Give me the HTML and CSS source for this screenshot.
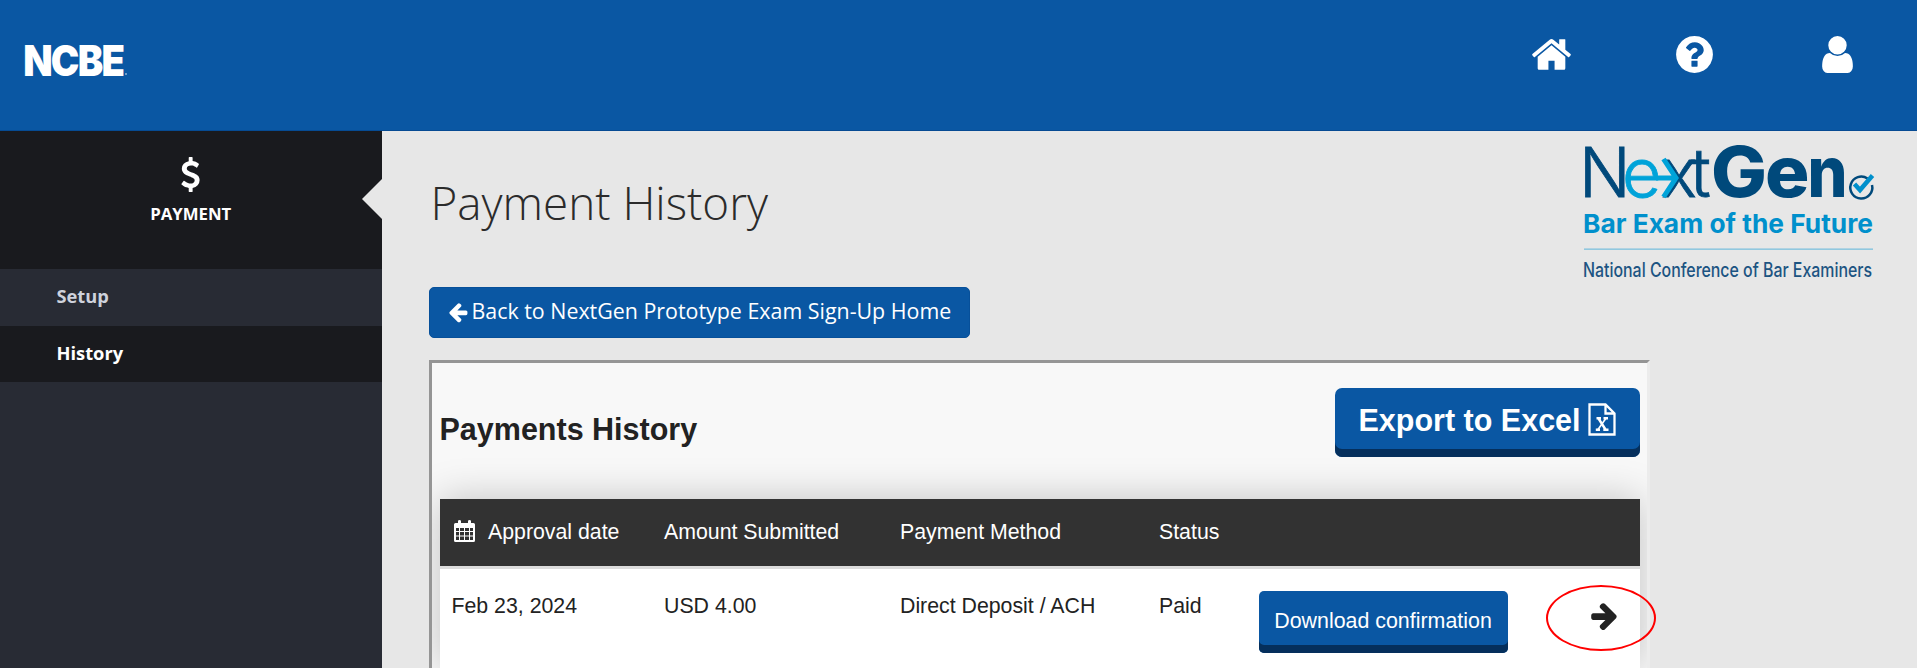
FILE: index.html
```html
<!DOCTYPE html>
<html lang="en">
<head>
<meta charset="utf-8">
<title>Payment History</title>
<link rel="stylesheet" href="styles.css">
</head>
<body>
<header class="topbar">
  <svg class="ncbe" width="110" height="44" viewBox="0 0 110 44" role="img" aria-label="NCBE">
    <text class="ncbe-word" transform="scale(.9 1)" x="-2" y="37" textLength="113" lengthAdjust="spacing">NCBE</text>
    <circle cx="101" cy="35" r="1" fill="#8fb3d6"/>
  </svg>
  <nav class="topnav">
    <a><svg class="icon-nav" viewBox="0 0 1792 1792"><path d="M1472 992v480q0 26-19 45t-45 19h-384v-384h-256v384h-384q-26 0-45-19t-19-45v-480q0-1 .5-3t.5-3l575-474 575 474q1 2 1 6zm223-69l-62 74q-8 9-21 11h-3q-13 0-21-7l-692-577-692 577q-12 8-24 7-13-2-21-11l-62-74q-8-10-7-23.5t11-21.5l719-599q32-26 76-26t76 26l244 204v-195q0-14 9-23t23-9h192q14 0 23 9t9 23v408l219 182q10 8 11 21.5t-7 23.5z"/></svg></a>
    <a><svg class="icon-nav" viewBox="0 0 1792 1792"><path d="M1024 1376v-192q0-14-9-23t-23-9h-192q-14 0-23 9t-9 23v192q0 14 9 23t23 9h192q14 0 23-9t9-23zm256-672q0-88-55.5-163t-138.5-116-170-41q-243 0-371 213-15 24 8 42l132 100q7 6 19 6 16 0 25-12 53-68 86-92 34-24 86-24 48 0 85.5 26t37.5 59q0 38-20 61t-68 45q-63 28-115.5 86.5t-52.5 125.5v36q0 14 9 23t23 9h192q14 0 23-9t9-23q0-19 21.5-49.5t54.5-49.5q32-18 49-28.5t46-35 44.5-48 28-60.5 12.5-81zm384 192q0 209-103 385.5t-279.5 279.5-385.5 103-385.5-103-279.5-279.5-103-385.5 103-385.5 279.5-279.5 385.5-103 385.5 103 279.5 279.5 103 385.5z"/></svg></a>
    <a><svg class="icon-nav" viewBox="0 0 1792 1792"><path d="M1536 1399q0 109-62.5 187t-150.5 78h-854q-88 0-150.5-78t-62.5-187q0-85 8.5-160.5t31.5-152 58.5-131 94-89 134.5-34.5q131 128 313 128t313-128q76 0 134.5 34.5t94 89 58.5 131 31.5 152 8.5 160.5zm-256-887q0 159-112.5 271.5t-271.5 112.5-271.5-112.5-112.5-271.5 112.5-271.5 271.5-112.5 271.5 112.5 112.5 271.5z"/></svg></a>
  </nav>
</header>
<div class="body">
  <aside class="sidebar">
    <div class="section">
      <svg class="icon-usd" viewBox="0 0 1792 1792"><path d="M1362 1185q0 153-99.5 263.5t-258.5 136.5v175q0 14-9 23t-23 9h-135q-13 0-22.5-9.5t-9.5-22.5v-175q-66-9-127.5-31t-101.5-44.5-74-48-46.5-37.5-17.5-18q-17-21-2-41l103-135q7-10 23-12 15-2 24 9l2 2q113 99 243 125 37 8 74 8 81 0 142.5-43t61.5-122q0-28-15-53t-33.5-42-58.5-37.5-66-32-80-32.5q-39-16-61.5-25t-61.5-26.5-62.5-31-56.5-35.5-53.5-42.5-43.5-49-35.5-58-21-66.5-8.5-78q0-138 98-242t255-134v-180q0-13 9.5-22.5t22.5-9.5h135q14 0 23 9t9 23v176q57 6 110.5 23t87 33.5 63.5 37.5 39 29 15 14q17 18 5 38l-81 146q-8 15-23 16-14 3-27-7-3-3-14.5-12t-39-26.5-58.5-32-74.5-26-85.5-11.5q-95 0-155 43t-60 111q0 26 8.5 48t29.5 41.5 39.5 33 56 31 60.5 27 70 27.5q53 20 81 31.5t76 35 75.5 42.5 62 50 53 63.5 31.5 76.5 13 94z"/></svg>
      <span class="section-name">PAYMENT</span>
      <i class="notch"></i>
    </div>
    <a class="item">Setup</a>
    <a class="item current">History</a>
  </aside>
  <main class="main">
    <div class="head">
      <div class="head-left">
        <h1 class="title">Payment History</h1>
        <a class="back"><svg class="icon-back" viewBox="0 0 1792 1792"><path d="M1664 896v128q0 53-32.5 90.5t-84.5 37.5h-704l293 294q38 36 38 90t-38 90l-75 76q-37 37-90 37-52 0-91-37l-651-652q-37-37-37-90 0-52 37-91l651-650q38-38 91-38 52 0 90 38l75 74q38 38 38 91t-38 91l-293 293h704q52 0 84.5 37.5t32.5 90.5z"/></svg><span class="back-label">Back to NextGen Prototype Exam Sign-Up Home</span></a>
      </div>
      <svg class="nextgen" width="300" height="150" viewBox="0 0 300 150">
        <text class="thin" y="65.500" x="-5 38 77 106.500">N<tspan class="cyan">e</tspan>xt</text>
        <path class="x-gap" d="M75.500 28L88 47L75.500 66"/>
        <path class="x-arrow" d="M79.500 28L92 47L79.500 66M72 47H90"/>
        <g class="heavy">
          <text x="127" y="66" textLength="56" lengthAdjust="spacingAndGlyphs">G</text>
          <text x="181" y="66" textLength="44.500" lengthAdjust="spacingAndGlyphs">e</text>
          <text x="223.500" y="66" textLength="40" lengthAdjust="spacingAndGlyphs">n</text>
        </g>
        <path class="ring" d="M283.500 47.500A11 11 0 1 0 288 54"/>
        <path class="tick" d="M270.500 53L276 59L288.500 44.500"/>
        <text class="tagline" x="-1" y="102" textLength="290" lengthAdjust="spacingAndGlyphs">Bar Exam of the Future</text>
        <rect x="0" y="117.500" width="289" height="1.300" fill="#7cc0dd"/>
        <text class="org" x="-1" y="145.500" textLength="289" lengthAdjust="spacingAndGlyphs">National Conference of Bar Examiners</text>
      </svg>
    </div>
    <div class="frame-wrap">
      <section class="frame">
        <div class="frame-head">
          <h2 class="subtitle">Payments History</h2>
          <button class="btn export"><span class="export-label">Export to Excel</span>
            <svg class="icon-excel" width="28" height="33" viewBox="0 0 28 33"><path d="M1.500 1.500H17.500L26.500 10.500V31.500H1.500ZM17.500 1.500V10.500H26.500"/><path d="M10.500 15.500L17.500 26.500M8.500 15.200H13M15.500 15.200H20M7.800 26.800H12M15.300 26.800H20.500" stroke-width="2.400"/><path d="M17.800 15.500L10 26.500" stroke-width="1.600"/></svg>
          </button>
        </div>
        <div class="table">
          <div class="row thead">
            <div class="cell date"><svg class="icon-cal" width="21" height="22" viewBox="0 0 21 22"><path fill-rule="evenodd" d="M1.500 3H4V1.200Q4 0 5.500 0T7 1.200V3H14V1.200Q14 0 15.500 0T17 1.200V3H19.500Q21 3 21 4.500V20.500Q21 22 19.500 22H1.500Q0 22 0 20.500V4.500Q0 3 1.500 3ZM2 8V11H5V8ZM6 8V11H10V8ZM11 8V11H15V8ZM16 8V11H19V8ZM2 12V15.500H5V12ZM6 12V15.500H10V12ZM11 12V15.500H15V12ZM16 12V15.500H19V12ZM2 16.500V20H5V16.500ZM6 16.500V20H10V16.500ZM11 16.500V20H15V16.500ZM16 16.500V20H19V16.500Z"/></svg>Approval date</div>
            <div class="cell">Amount Submitted</div>
            <div class="cell">Payment Method</div>
            <div class="cell">Status</div>
          </div>
          <div class="row entry">
            <div class="cell first">Feb 23, 2024</div>
            <div class="cell">USD 4.00</div>
            <div class="cell">Direct Deposit / ACH</div>
            <div class="cell">Paid</div>
            <div class="action"><button class="btn download">Download confirmation</button></div>
            <div class="go">
              <svg class="icon-go" viewBox="0 0 1792 1792"><path d="M1600 960q0 54-37 91l-651 651q-39 37-91 37-51 0-90-37l-75-75q-38-38-38-91t38-91l293-293h-704q-52 0-84.500-37.500t-32.500-90.500v-128q0-53 32.500-90.500t84.500-37.500h704l-293-294q-38-36-38-90t38-90l75-75q38-38 90-38 53 0 91 38l651 651q37 35 37 90z"/></svg>
            </div>
          </div>
        </div>
      </section>
      <i class="marker"></i>
    </div>
  </main>
</div>
</body>
</html>
```
FILE: styles.css
```css
* { box-sizing: border-box; }
body {
  margin: 0;
  height: 668px;
  overflow: hidden;
  display: flex;
  flex-direction: column;
  background: #e7e7e7;
  font-family: "Liberation Sans", Arial, sans-serif;
  color: #222;
}
.topbar {
  flex: none;
  height: 131px;
  padding: 33px 58px 0 25px;
  display: flex;
  justify-content: space-between;
  align-items: flex-start;
  background: #0a57a3;
  border-bottom: 1px solid #064b93;
}
.ncbe { margin-top: 6px; overflow: visible; }
.ncbe-word { font: 900 42.5px Inter, sans-serif; fill: #fff; }
.topnav { display: flex; gap: 100px; }
.icon-nav { display: block; width: 43px; height: 43px; fill: #fff; }

.body { flex: 1; display: flex; min-height: 0; }
.sidebar {
  flex: none;
  width: 381.5px;
  background: #282b34;
  display: flex;
  flex-direction: column;
  font-family: "Open Sans", sans-serif;
  font-weight: 700;
}
.section {
  position: relative;
  height: 138px;
  padding-top: 26px;
  display: flex;
  flex-direction: column;
  align-items: center;
  background: #191a1e;
  color: #fff;
}
.icon-usd { width: 35px; height: 35px; fill: #fff; }
.section-name { margin-top: 9px; font-size: 16.8px; line-height: 25px; }
.notch {
  position: absolute;
  right: 0;
  top: 48px;
  border: solid transparent;
  border-width: 20.5px 20.5px 20.5px 0;
  border-right-color: #e7e7e7;
}
.item {
  height: 57px;
  padding-left: 56.5px;
  font-size: 18.3px;
  line-height: 54px;
  color: #ced2dc;
}
.item.current { height: 56px; background: #191a1e; color: #fff; }

.main { flex: 1; padding-left: 47px; min-width: 0; }
.head { height: 229px; display: flex; justify-content: space-between; }
.head-left { display: flex; flex-direction: column; align-items: flex-start; }
.title {
  margin: 40px 0 0 2px;
  font: 300 45.8px/62px "Open Sans", sans-serif;
  color: #2b2b2b;
  white-space: nowrap;
}
.back {
  margin-top: 54px;
  width: 541.5px;
  height: 51px;
  padding: 0 0 3px 17px;
  display: flex;
  align-items: center;
  gap: 3px;
  border-radius: 5px;
  background: #0a57a3;
  border: 1px solid #07509a;
  color: #fff;
  font: 21.4px/30px "Open Sans", sans-serif;
  white-space: nowrap;
}
.icon-back { width: 22px; height: 24px; fill: #fff; margin-top: 2px; }
.nextgen { margin-right: 33px; overflow: visible; }
.thin { font: 300 68px Inter, sans-serif; fill: #00497b; stroke: #00497b; stroke-width: .8px; }
.cyan { fill: #00a3d9; stroke: #00a3d9; }
.heavy text { font: 800 70px Inter, sans-serif; fill: #00497b; }
.x-gap { fill: none; stroke: #e7e7e7; stroke-width: 3px; }
.x-arrow { fill: none; stroke: #00a3d9; stroke-width: 5px; }
.ring { fill: none; stroke: #00497b; stroke-width: 2.5px; }
.tick { fill: none; stroke: #0090cc; stroke-width: 4.5px; }
.tagline { font: 700 26px Inter, sans-serif; fill: #0090cc; }
.org { font: 500 19.5px Inter, sans-serif; fill: #1c5482; }

.frame-wrap { position: relative; width: 1221px; }
.frame {
  height: 308px;
  padding: 0 7px 0 8px;
  border: solid;
  border-color: #959595 #ececec #ececec #959595;
  border-width: 3px 3px 0 3px;
  background: #f8f8f8;
  overflow: hidden;
}
.frame-head { height: 135.5px; display: flex; justify-content: space-between; align-items: flex-start; }
.subtitle { margin: 48px 0 0; font-size: 30.5px; line-height: 36px; }
.btn {
  border: 0;
  padding: 0;
  font-family: inherit;
  color: #fff;
  background: #0a57a3;
  box-shadow: inset 0 -8px #052f5c;
  position: relative;
  overflow: hidden;
  white-space: nowrap;
}
.export {
  margin: 24.5px 0 0;
  width: 305px;
  height: 69px;
  padding: 0 24px 3px;
  display: flex;
  align-items: center;
  justify-content: space-between;
  border-radius: 7px;
  font-size: 30.5px;
  font-weight: 700;
}
.icon-excel { fill: none; stroke: #fff; stroke-width: 2.3px; margin-top: -2px; }
.table { box-shadow: 0 0 38px rgba(0, 0, 0, .22); }
.row { display: grid; grid-template-columns: 224.5px 236px 259px 99.5px 285px 1fr; font-size: 21.3px; }
.thead {
  height: 70px;
  line-height: 66px;
  color: #fff;
  background: #323232;
  border-bottom: 3px solid #dcdcdc;
}
.cell { white-space: nowrap; }
.date { display: flex; align-items: center; gap: 13.5px; padding-left: 14px; }
.icon-cal { fill: #fff; margin-top: -2px; }
.entry { height: 99px; background: #fff; }
.entry .cell { padding-top: 24px; line-height: 26px; }
.entry .first { padding-left: 12px; }
.action { padding-top: 22px; }
.download {
  width: 249px;
  height: 62px;
  padding-bottom: 1px;
  border-radius: 5px;
  font-size: 21.4px;
}
.go { padding: 31px 0 0 45px; }
.icon-go { display: block; width: 31px; height: 31px; fill: #222; }
.marker {
  position: absolute;
  left: 1117.5px;
  top: 225px;
  width: 110px;
  height: 66px;
  border: 2px solid #f00;
  border-radius: 50%;
}
```
